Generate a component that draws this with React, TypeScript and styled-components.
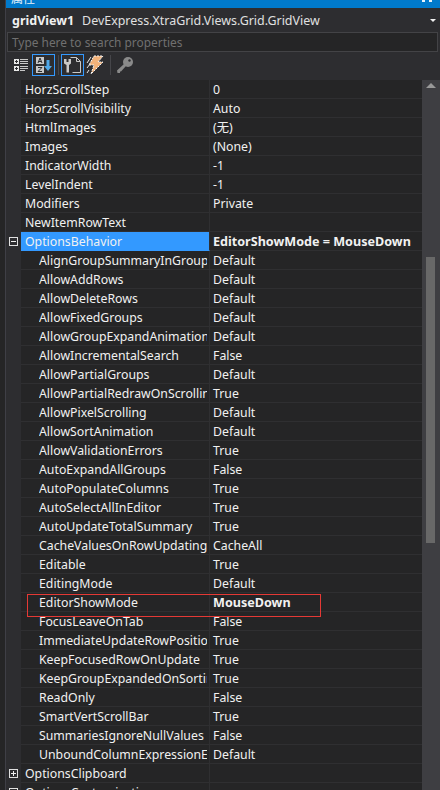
import { createGlobalStyle, styled } from 'styled-components';

type Prop = {
    name: string;
    value?: string;
    indent?: boolean;
    tree?: 'open' | 'closed';
    selected?: boolean;
    bold?: boolean;
    marked?: boolean;
};

const props: Prop[] = [
    { name: 'HorzScrollStep', value: '0' },
    { name: 'HorzScrollVisibility', value: 'Auto' },
    { name: 'HtmlImages', value: '(无)' },
    { name: 'Images', value: '(None)' },
    { name: 'IndicatorWidth', value: '-1' },
    { name: 'LevelIndent', value: '-1' },
    { name: 'Modifiers', value: 'Private' },
    { name: 'NewItemRowText', value: '' },
    { name: 'OptionsBehavior', value: 'EditorShowMode = MouseDown', tree: 'open', selected: true, bold: true },
    { name: 'AlignGroupSummaryInGroup', value: 'Default', indent: true },
    { name: 'AllowAddRows', value: 'Default', indent: true },
    { name: 'AllowDeleteRows', value: 'Default', indent: true },
    { name: 'AllowFixedGroups', value: 'Default', indent: true },
    { name: 'AllowGroupExpandAnimation', value: 'Default', indent: true },
    { name: 'AllowIncrementalSearch', value: 'False', indent: true },
    { name: 'AllowPartialGroups', value: 'Default', indent: true },
    { name: 'AllowPartialRedrawOnScrolling', value: 'True', indent: true },
    { name: 'AllowPixelScrolling', value: 'Default', indent: true },
    { name: 'AllowSortAnimation', value: 'Default', indent: true },
    { name: 'AllowValidationErrors', value: 'True', indent: true },
    { name: 'AutoExpandAllGroups', value: 'False', indent: true },
    { name: 'AutoPopulateColumns', value: 'True', indent: true },
    { name: 'AutoSelectAllInEditor', value: 'True', indent: true },
    { name: 'AutoUpdateTotalSummary', value: 'True', indent: true },
    { name: 'CacheValuesOnRowUpdating', value: 'CacheAll', indent: true },
    { name: 'Editable', value: 'True', indent: true },
    { name: 'EditingMode', value: 'Default', indent: true },
    { name: 'EditorShowMode', value: 'MouseDown', indent: true, bold: true, marked: true },
    { name: 'FocusLeaveOnTab', value: 'False', indent: true },
    { name: 'ImmediateUpdateRowPosition', value: 'True', indent: true },
    { name: 'KeepFocusedRowOnUpdate', value: 'True', indent: true },
    { name: 'KeepGroupExpandedOnSorting', value: 'True', indent: true },
    { name: 'ReadOnly', value: 'False', indent: true },
    { name: 'SmartVertScrollBar', value: 'True', indent: true },
    { name: 'SummariesIgnoreNullValues', value: 'False', indent: true },
    { name: 'UnboundColumnExpressionEditorMode', value: 'Default', indent: true },
    { name: 'OptionsClipboard', value: '', tree: 'closed' },
    { name: 'OptionsCustomization', value: '', tree: 'closed' },
];

const TreeToggle = ({ open }: { open: boolean }) => (
    <svg width="9" height="9" viewBox="0 0 9 9">
        <rect x="0.5" y="0.5" width="8" height="8" fill="none" stroke="#e0e0e0" />
        <path d={open ? 'M2 4.5h5' : 'M2 4.5h5M4.5 2v5'} stroke="#f0f0f0" fill="none" />
    </svg>
);

const CategorizedIcon = () => (
    <svg width="16" height="16" viewBox="0 0 16 16">
        <path d="M1 2h5v5H1zM1 9h5v5H1z" fill="#e8e8e8" />
        <path d="M2 4.5h3M3.5 3v3M2 11.5h3M3.5 10v3" stroke="#2d2d30" fill="none" />
        <path d="M7 2.5h8M7 4.5h8M7 6.5h8M7 9.5h8M7 11.5h8M7 13.5h5" stroke="#c8c8c8" fill="none" />
    </svg>
);

const SortIcon = () => (
    <svg width="18" height="18" viewBox="0 0 18 18">
        <path d="M1 1h8v7H1zM1 10h8v7H1z" fill="#c8c8c8" />
        <path d="M3 7l2-5 2 5M3.7 5.5h2.6" stroke="#2d2d30" fill="none" />
        <path d="M3 11.5h4l-4 4h4" stroke="#2d2d30" fill="none" />
        <path d="M11.5 4h3v6h2.5l-4 5-4-5h2.5z" fill="#4fa8e8" />
    </svg>
);

const PagesIcon = () => (
    <svg width="20" height="20" viewBox="0 0 20 20">
        <path d="M7.5 2.5h6l4 4v11h-8" fill="none" stroke="#c8c8c8" />
        <path d="M13.5 2.5v4h4" fill="none" stroke="#c8c8c8" />
        <path d="M1 4h2.5v3h2V4H8v4.5L6 10v7.5H3.5V10L1 8.5z" fill="#c8c8c8" />
    </svg>
);

const BoltIcon = () => (
    <svg width="20" height="20" viewBox="0 0 20 20">
        <path d="M8 1h9l-5 6h5L5 19l3-9H3z" fill="#f2b27a" stroke="#f4f4f4" strokeWidth="1" strokeDasharray="2 1" />
        <path d="M1 8l4-6M1 13l3-4M1 18l2-3" stroke="#e8e8e8" fill="none" />
    </svg>
);

const KeyIcon = () => (
    <svg width="18" height="18" viewBox="0 0 18 18">
        <circle cx="12" cy="6" r="5" fill="#8a8a8a" />
        <circle cx="13.5" cy="4.5" r="1.2" fill="#2d2d30" />
        <path d="M8 8l2 2-5 5.5H4v1.5H1.5L1 14.5z" fill="#8a8a8a" />
    </svg>
);

const App = () => {
    return (
        <>
            <GlobalStyle />
            <Window>
                <Gutter />
                <Panel>
                    <TitleBar>
                        <TitleText>属性</TitleText>
                        <PinMarks />
                    </TitleBar>
                    <ObjectRow>
                        <ObjectName>gridView1</ObjectName>
                        <ObjectType>DevExpress.XtraGrid.Views.Grid.GridView</ObjectType>
                        <DropArrow />
                    </ObjectRow>
                    <Search>Type here to search properties</Search>
                    <Toolbar>
                        <ToolButton><CategorizedIcon /></ToolButton>
                        <ToolButton $active><SortIcon /></ToolButton>
                        <ToolSeparator />
                        <ToolButton $active><PagesIcon /></ToolButton>
                        <ToolButton><BoltIcon /></ToolButton>
                        <ToolSeparator />
                        <ToolButton><KeyIcon /></ToolButton>
                    </Toolbar>
                    <Body>
                        <Grid>
                            {props.map((prop) => (
                                <Row key={prop.name}>
                                    <Toggle>{prop.tree && <TreeToggle open={prop.tree === 'open'} />}</Toggle>
                                    <NameCell $selected={prop.selected} $indent={prop.indent}>
                                        <NameText>{prop.name}</NameText>
                                    </NameCell>
                                    <ValueCell $bold={prop.bold}>{prop.value}</ValueCell>
                                    {prop.marked && <Marker />}
                                </Row>
                            ))}
                        </Grid>
                        <ScrollBar>
                            <ScrollArrow />
                            <ScrollThumb />
                        </ScrollBar>
                    </Body>
                </Panel>
            </Window>
        </>
    );
};

export default App;

const GlobalStyle = createGlobalStyle`
    html, body {
        margin: 0;
        height: 100%;
        overflow: hidden;
        background: #2d2d30;
    }
`;

const Window = styled.div`
    display: flex;
    width: 440px;
    height: 790px;
    overflow: hidden;
    font-family: 'Noto Sans', 'Noto Sans CJK SC', sans-serif;
    font-size: 12px;
    color: #f1f1f1;
`;

const Gutter = styled.div`
    flex: 0 0 6px;
    box-sizing: border-box;
    background: #252526;
    border-right: 1px solid #3f3f46;
`;

const Panel = styled.div`
    flex: 1;
    min-width: 0;
    display: flex;
    flex-direction: column;
`;

const TitleBar = styled.div`
    flex: 0 0 8px;
    background: #007acc;
    overflow: hidden;
    position: relative;
`;

const TitleText = styled.div`
    margin: -9px 0 0 5px;
    line-height: 16px;
    font-size: 12px;
    color: #e8f4fc;
`;

const PinMarks = styled.div`
    position: absolute;
    top: 0;
    right: 8px;
    width: 10px;
    height: 2px;
    border: solid #e8f4fc;
    border-width: 0 3px;
    box-sizing: border-box;
`;

const ObjectRow = styled.div`
    flex: 0 0 24px;
    display: flex;
    align-items: center;
    padding: 0 4px 0 6px;
    gap: 8px;
`;

const ObjectName = styled.span`
    font-weight: 700;
    font-size: 12.5px;
    color: #f1f1f1;
`;

const ObjectType = styled.span`
    flex: 1;
    font-size: 12.45px;
    color: #e0e0e0;
`;

const DropArrow = styled.i`
    width: 0;
    height: 0;
    border: 3px solid transparent;
    border-top: 3px solid #f1f1f1;
    margin-top: 3px;
`;

const Search = styled.div`
    flex: 0 0 20px;
    margin: 0 2px 0 1px;
    box-sizing: border-box;
    border: 1px solid #434346;
    background: #252526;
    padding-left: 4px;
    line-height: 18px;
    font-size: 11.9px;
    color: #707070;
`;

const Toolbar = styled.div`
    flex: 0 0 28px;
    display: flex;
    align-items: center;
    padding: 0 0 2px 3px;
    box-sizing: border-box;
`;

const ToolButton = styled.div<{ $active?: boolean }>`
    width: 23px;
    height: 22px;
    display: flex;
    align-items: center;
    justify-content: center;
    box-sizing: border-box;
    border: 1px solid ${(p) => (p.$active ? '#3399ff' : 'transparent')};
`;

const ToolSeparator = styled.div`
    width: 1px;
    height: 20px;
    margin: 0 2px 0 3px;
    background: #46464a;
`;

const Body = styled.div`
    flex: 1;
    min-height: 0;
    display: flex;
`;

const Grid = styled.div`
    flex: 1;
    min-width: 0;
    overflow: hidden;
`;

const Row = styled.div`
    position: relative;
    height: 19px;
    display: flex;
`;

const Toggle = styled.div`
    flex: 0 0 15px;
    display: flex;
    align-items: center;
    padding-left: 3px;
    box-sizing: border-box;
`;

const NameCell = styled.div<{ $selected?: boolean; $indent?: boolean }>`
    flex: 0 0 189px;
    min-width: 0;
    box-sizing: border-box;
    line-height: 20px;
    font-size: 12.3px;
    padding-left: ${(p) => (p.$indent ? '18px' : '4px')};
    padding-right: 2px;
    background: ${(p) => (p.$selected ? '#3399ff' : '#252526')};
    border-bottom: 1px solid ${(p) => (p.$selected ? '#3399ff' : '#2f2f31')};
    border-right: 1px solid #2f2f31;
`;

const NameText = styled.div`
    overflow: hidden;
    white-space: nowrap;
`;

const ValueCell = styled.div<{ $bold?: boolean }>`
    flex: 1;
    min-width: 0;
    box-sizing: border-box;
    white-space: nowrap;
    overflow: hidden;
    line-height: 20px;
    font-size: ${(p) => (p.$bold ? '12.6px' : '12.3px')};
    padding-left: 3px;
    font-weight: ${(p) => (p.$bold ? 700 : 400)};
    background: #252526;
    border-bottom: 1px solid #2f2f31;
`;

const Marker = styled.div`
    position: absolute;
    z-index: 1;
    left: 21px;
    top: 1px;
    width: 294px;
    height: 23px;
    box-sizing: border-box;
    border: 1px solid #e53935;
    pointer-events: none;
`;

const ScrollBar = styled.div`
    flex: 0 0 18px;
    position: relative;
    background: #3e3e42;
`;

const ScrollArrow = styled.i`
    position: absolute;
    top: 3px;
    left: 4px;
    width: 0;
    height: 0;
    border: 5px solid transparent;
    border-top: 0;
    border-bottom: 5px solid #999999;
`;

const ScrollThumb = styled.div`
    position: absolute;
    top: 177px;
    left: 4px;
    width: 9px;
    height: 286px;
    background: #686868;
`;
